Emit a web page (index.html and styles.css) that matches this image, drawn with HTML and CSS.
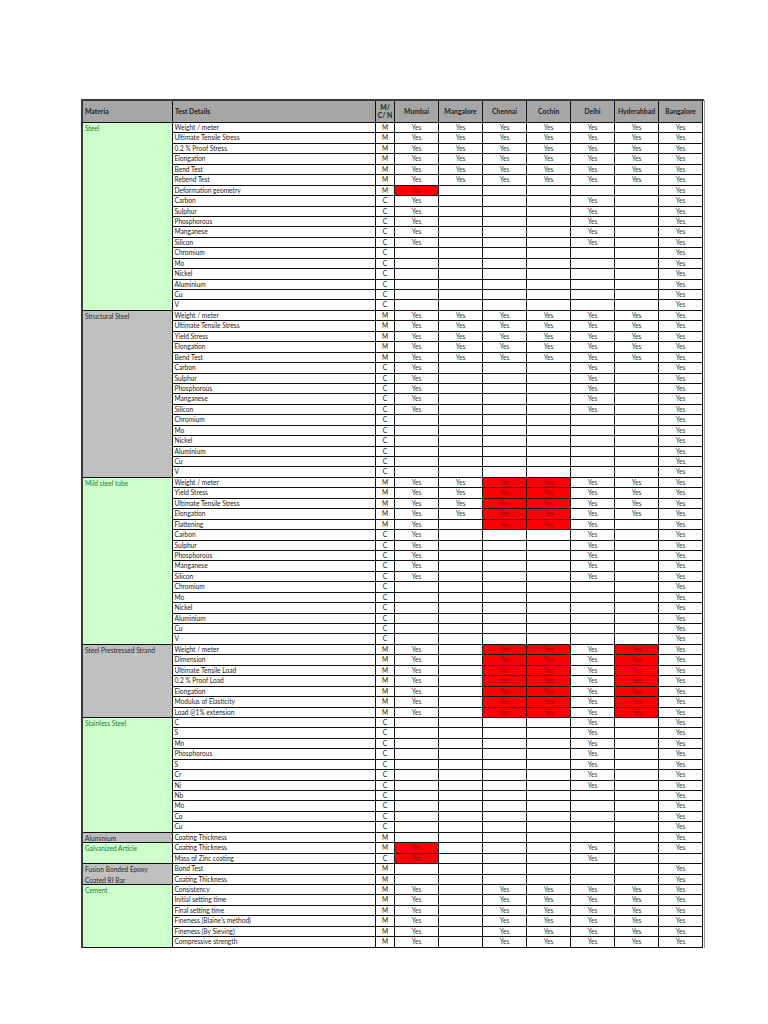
FILE: index.html
```html
<!DOCTYPE html>
<html>
<head>
<meta charset="utf-8">
<title>Material tests</title>
<link rel="stylesheet" href="styles.css">
</head>
<body>
<div class="sheet">
<div class="h hl">Materia</div><div class="h hl">Test Details</div><div class="h hc">M/<br>C/ N</div><div class="h">Mumbai</div><div class="h">Mangalore</div><div class="h">Chennai</div><div class="h">Cochin</div><div class="h">Delhi</div><div class="h">Hyderahbad</div><div class="h">Bangalore</div>

<div class="m g s18">Steel</div>
<div class="t">Weight / meter</div><div class="c">M</div><div class="v">Yes</div><div class="v">Yes</div><div class="v">Yes</div><div class="v">Yes</div><div class="v">Yes</div><div class="v">Yes</div><div class="v">Yes</div>
<div class="t">Ultimate Tensile Stress</div><div class="c">M</div><div class="v">Yes</div><div class="v">Yes</div><div class="v">Yes</div><div class="v">Yes</div><div class="v">Yes</div><div class="v">Yes</div><div class="v">Yes</div>
<div class="t">0.2 % Proof Stress</div><div class="c">M</div><div class="v">Yes</div><div class="v">Yes</div><div class="v">Yes</div><div class="v">Yes</div><div class="v">Yes</div><div class="v">Yes</div><div class="v">Yes</div>
<div class="t">Elongation</div><div class="c">M</div><div class="v">Yes</div><div class="v">Yes</div><div class="v">Yes</div><div class="v">Yes</div><div class="v">Yes</div><div class="v">Yes</div><div class="v">Yes</div>
<div class="t">Bend Test</div><div class="c">M</div><div class="v">Yes</div><div class="v">Yes</div><div class="v">Yes</div><div class="v">Yes</div><div class="v">Yes</div><div class="v">Yes</div><div class="v">Yes</div>
<div class="t">Rebend Test</div><div class="c">M</div><div class="v">Yes</div><div class="v">Yes</div><div class="v">Yes</div><div class="v">Yes</div><div class="v">Yes</div><div class="v">Yes</div><div class="v">Yes</div>
<div class="t">Deformation geometry</div><div class="c">M</div><div class="v r">Yes</div><div class="v"></div><div class="v"></div><div class="v"></div><div class="v"></div><div class="v"></div><div class="v">Yes</div>
<div class="t">Carbon</div><div class="c">C</div><div class="v">Yes</div><div class="v"></div><div class="v"></div><div class="v"></div><div class="v">Yes</div><div class="v"></div><div class="v">Yes</div>
<div class="t">Sulphur</div><div class="c">C</div><div class="v">Yes</div><div class="v"></div><div class="v"></div><div class="v"></div><div class="v">Yes</div><div class="v"></div><div class="v">Yes</div>
<div class="t">Phosphorous</div><div class="c">C</div><div class="v">Yes</div><div class="v"></div><div class="v"></div><div class="v"></div><div class="v">Yes</div><div class="v"></div><div class="v">Yes</div>
<div class="t">Manganese</div><div class="c">C</div><div class="v">Yes</div><div class="v"></div><div class="v"></div><div class="v"></div><div class="v">Yes</div><div class="v"></div><div class="v">Yes</div>
<div class="t">Silicon</div><div class="c">C</div><div class="v">Yes</div><div class="v"></div><div class="v"></div><div class="v"></div><div class="v">Yes</div><div class="v"></div><div class="v">Yes</div>
<div class="t">Chromium</div><div class="c">C</div><div class="v"></div><div class="v"></div><div class="v"></div><div class="v"></div><div class="v"></div><div class="v"></div><div class="v">Yes</div>
<div class="t">Mo</div><div class="c">C</div><div class="v"></div><div class="v"></div><div class="v"></div><div class="v"></div><div class="v"></div><div class="v"></div><div class="v">Yes</div>
<div class="t">Nickel</div><div class="c">C</div><div class="v"></div><div class="v"></div><div class="v"></div><div class="v"></div><div class="v"></div><div class="v"></div><div class="v">Yes</div>
<div class="t">Aluminium</div><div class="c">C</div><div class="v"></div><div class="v"></div><div class="v"></div><div class="v"></div><div class="v"></div><div class="v"></div><div class="v">Yes</div>
<div class="t">Cu</div><div class="c">C</div><div class="v"></div><div class="v"></div><div class="v"></div><div class="v"></div><div class="v"></div><div class="v"></div><div class="v">Yes</div>
<div class="t">V</div><div class="c">C</div><div class="v"></div><div class="v"></div><div class="v"></div><div class="v"></div><div class="v"></div><div class="v"></div><div class="v">Yes</div>

<div class="m k s16">Structural Steel</div>
<div class="t">Weight / meter</div><div class="c">M</div><div class="v">Yes</div><div class="v">Yes</div><div class="v">Yes</div><div class="v">Yes</div><div class="v">Yes</div><div class="v">Yes</div><div class="v">Yes</div>
<div class="t">Ultimate Tensile Stress</div><div class="c">M</div><div class="v">Yes</div><div class="v">Yes</div><div class="v">Yes</div><div class="v">Yes</div><div class="v">Yes</div><div class="v">Yes</div><div class="v">Yes</div>
<div class="t">Yield Stress</div><div class="c">M</div><div class="v">Yes</div><div class="v">Yes</div><div class="v">Yes</div><div class="v">Yes</div><div class="v">Yes</div><div class="v">Yes</div><div class="v">Yes</div>
<div class="t">Elongation</div><div class="c">M</div><div class="v">Yes</div><div class="v">Yes</div><div class="v">Yes</div><div class="v">Yes</div><div class="v">Yes</div><div class="v">Yes</div><div class="v">Yes</div>
<div class="t">Bend Test</div><div class="c">M</div><div class="v">Yes</div><div class="v">Yes</div><div class="v">Yes</div><div class="v">Yes</div><div class="v">Yes</div><div class="v">Yes</div><div class="v">Yes</div>
<div class="t">Carbon</div><div class="c">C</div><div class="v">Yes</div><div class="v"></div><div class="v"></div><div class="v"></div><div class="v">Yes</div><div class="v"></div><div class="v">Yes</div>
<div class="t">Sulphur</div><div class="c">C</div><div class="v">Yes</div><div class="v"></div><div class="v"></div><div class="v"></div><div class="v">Yes</div><div class="v"></div><div class="v">Yes</div>
<div class="t">Phosphorous</div><div class="c">C</div><div class="v">Yes</div><div class="v"></div><div class="v"></div><div class="v"></div><div class="v">Yes</div><div class="v"></div><div class="v">Yes</div>
<div class="t">Manganese</div><div class="c">C</div><div class="v">Yes</div><div class="v"></div><div class="v"></div><div class="v"></div><div class="v">Yes</div><div class="v"></div><div class="v">Yes</div>
<div class="t">Silicon</div><div class="c">C</div><div class="v">Yes</div><div class="v"></div><div class="v"></div><div class="v"></div><div class="v">Yes</div><div class="v"></div><div class="v">Yes</div>
<div class="t">Chromium</div><div class="c">C</div><div class="v"></div><div class="v"></div><div class="v"></div><div class="v"></div><div class="v"></div><div class="v"></div><div class="v">Yes</div>
<div class="t">Mo</div><div class="c">C</div><div class="v"></div><div class="v"></div><div class="v"></div><div class="v"></div><div class="v"></div><div class="v"></div><div class="v">Yes</div>
<div class="t">Nickel</div><div class="c">C</div><div class="v"></div><div class="v"></div><div class="v"></div><div class="v"></div><div class="v"></div><div class="v"></div><div class="v">Yes</div>
<div class="t">Aluminium</div><div class="c">C</div><div class="v"></div><div class="v"></div><div class="v"></div><div class="v"></div><div class="v"></div><div class="v"></div><div class="v">Yes</div>
<div class="t">Cu</div><div class="c">C</div><div class="v"></div><div class="v"></div><div class="v"></div><div class="v"></div><div class="v"></div><div class="v"></div><div class="v">Yes</div>
<div class="t">V</div><div class="c">C</div><div class="v"></div><div class="v"></div><div class="v"></div><div class="v"></div><div class="v"></div><div class="v"></div><div class="v">Yes</div>

<div class="m g s16">Mild steel tube</div>
<div class="t">Weight / meter</div><div class="c">M</div><div class="v">Yes</div><div class="v">Yes</div><div class="v r">Yes</div><div class="v r">Yes</div><div class="v">Yes</div><div class="v">Yes</div><div class="v">Yes</div>
<div class="t">Yield Stress</div><div class="c">M</div><div class="v">Yes</div><div class="v">Yes</div><div class="v r">Yes</div><div class="v r">Yes</div><div class="v">Yes</div><div class="v">Yes</div><div class="v">Yes</div>
<div class="t">Ultimate Tensile Stress</div><div class="c">M</div><div class="v">Yes</div><div class="v">Yes</div><div class="v r">Yes</div><div class="v r">Yes</div><div class="v">Yes</div><div class="v">Yes</div><div class="v">Yes</div>
<div class="t">Elongation</div><div class="c">M</div><div class="v">Yes</div><div class="v">Yes</div><div class="v r">Yes</div><div class="v r">Yes</div><div class="v">Yes</div><div class="v">Yes</div><div class="v">Yes</div>
<div class="t">Flattening</div><div class="c">M</div><div class="v">Yes</div><div class="v"></div><div class="v r">Yes</div><div class="v r">Yes</div><div class="v">Yes</div><div class="v"></div><div class="v">Yes</div>
<div class="t">Carbon</div><div class="c">C</div><div class="v">Yes</div><div class="v"></div><div class="v"></div><div class="v"></div><div class="v">Yes</div><div class="v"></div><div class="v">Yes</div>
<div class="t">Sulphur</div><div class="c">C</div><div class="v">Yes</div><div class="v"></div><div class="v"></div><div class="v"></div><div class="v">Yes</div><div class="v"></div><div class="v">Yes</div>
<div class="t">Phosphorous</div><div class="c">C</div><div class="v">Yes</div><div class="v"></div><div class="v"></div><div class="v"></div><div class="v">Yes</div><div class="v"></div><div class="v">Yes</div>
<div class="t">Manganese</div><div class="c">C</div><div class="v">Yes</div><div class="v"></div><div class="v"></div><div class="v"></div><div class="v">Yes</div><div class="v"></div><div class="v">Yes</div>
<div class="t">Silicon</div><div class="c">C</div><div class="v">Yes</div><div class="v"></div><div class="v"></div><div class="v"></div><div class="v">Yes</div><div class="v"></div><div class="v">Yes</div>
<div class="t">Chromium</div><div class="c">C</div><div class="v"></div><div class="v"></div><div class="v"></div><div class="v"></div><div class="v"></div><div class="v"></div><div class="v">Yes</div>
<div class="t">Mo</div><div class="c">C</div><div class="v"></div><div class="v"></div><div class="v"></div><div class="v"></div><div class="v"></div><div class="v"></div><div class="v">Yes</div>
<div class="t">Nickel</div><div class="c">C</div><div class="v"></div><div class="v"></div><div class="v"></div><div class="v"></div><div class="v"></div><div class="v"></div><div class="v">Yes</div>
<div class="t">Aluminium</div><div class="c">C</div><div class="v"></div><div class="v"></div><div class="v"></div><div class="v"></div><div class="v"></div><div class="v"></div><div class="v">Yes</div>
<div class="t">Cu</div><div class="c">C</div><div class="v"></div><div class="v"></div><div class="v"></div><div class="v"></div><div class="v"></div><div class="v"></div><div class="v">Yes</div>
<div class="t">V</div><div class="c">C</div><div class="v"></div><div class="v"></div><div class="v"></div><div class="v"></div><div class="v"></div><div class="v"></div><div class="v">Yes</div>

<div class="m k s7">Steel Prestressed Strand</div>
<div class="t">Weight / meter</div><div class="c">M</div><div class="v">Yes</div><div class="v"></div><div class="v r">Yes</div><div class="v r">Yes</div><div class="v">Yes</div><div class="v r">Yes</div><div class="v">Yes</div>
<div class="t">Dimension</div><div class="c">M</div><div class="v">Yes</div><div class="v"></div><div class="v r">Yes</div><div class="v r">Yes</div><div class="v">Yes</div><div class="v r">Yes</div><div class="v">Yes</div>
<div class="t">Ultimate Tensile Load</div><div class="c">M</div><div class="v">Yes</div><div class="v"></div><div class="v r">Yes</div><div class="v r">Yes</div><div class="v">Yes</div><div class="v r">Yes</div><div class="v">Yes</div>
<div class="t">0.2 % Proof Load</div><div class="c">M</div><div class="v">Yes</div><div class="v"></div><div class="v r">Yes</div><div class="v r">Yes</div><div class="v">Yes</div><div class="v r">Yes</div><div class="v">Yes</div>
<div class="t">Elongation</div><div class="c">M</div><div class="v">Yes</div><div class="v"></div><div class="v r">Yes</div><div class="v r">Yes</div><div class="v">Yes</div><div class="v r">Yes</div><div class="v">Yes</div>
<div class="t">Modulus of Elasticity</div><div class="c">M</div><div class="v">Yes</div><div class="v"></div><div class="v r">Yes</div><div class="v r">Yes</div><div class="v">Yes</div><div class="v r">Yes</div><div class="v">Yes</div>
<div class="t">Load @1% extension</div><div class="c">M</div><div class="v">Yes</div><div class="v"></div><div class="v r">Yes</div><div class="v r">Yes</div><div class="v">Yes</div><div class="v r">Yes</div><div class="v">Yes</div>

<div class="m g s11">Stainless Steel</div>
<div class="t">C</div><div class="c">C</div><div class="v"></div><div class="v"></div><div class="v"></div><div class="v"></div><div class="v">Yes</div><div class="v"></div><div class="v">Yes</div>
<div class="t">S</div><div class="c">C</div><div class="v"></div><div class="v"></div><div class="v"></div><div class="v"></div><div class="v">Yes</div><div class="v"></div><div class="v">Yes</div>
<div class="t">Mn</div><div class="c">C</div><div class="v"></div><div class="v"></div><div class="v"></div><div class="v"></div><div class="v">Yes</div><div class="v"></div><div class="v">Yes</div>
<div class="t">Phosphorous</div><div class="c">C</div><div class="v"></div><div class="v"></div><div class="v"></div><div class="v"></div><div class="v">Yes</div><div class="v"></div><div class="v">Yes</div>
<div class="t">S</div><div class="c">C</div><div class="v"></div><div class="v"></div><div class="v"></div><div class="v"></div><div class="v">Yes</div><div class="v"></div><div class="v">Yes</div>
<div class="t">Cr</div><div class="c">C</div><div class="v"></div><div class="v"></div><div class="v"></div><div class="v"></div><div class="v">Yes</div><div class="v"></div><div class="v">Yes</div>
<div class="t">Ni</div><div class="c">C</div><div class="v"></div><div class="v"></div><div class="v"></div><div class="v"></div><div class="v">Yes</div><div class="v"></div><div class="v">Yes</div>
<div class="t">Nb</div><div class="c">C</div><div class="v"></div><div class="v"></div><div class="v"></div><div class="v"></div><div class="v"></div><div class="v"></div><div class="v">Yes</div>
<div class="t">Mo</div><div class="c">C</div><div class="v"></div><div class="v"></div><div class="v"></div><div class="v"></div><div class="v"></div><div class="v"></div><div class="v">Yes</div>
<div class="t">Co</div><div class="c">C</div><div class="v"></div><div class="v"></div><div class="v"></div><div class="v"></div><div class="v"></div><div class="v"></div><div class="v">Yes</div>
<div class="t">Cu</div><div class="c">C</div><div class="v"></div><div class="v"></div><div class="v"></div><div class="v"></div><div class="v"></div><div class="v"></div><div class="v">Yes</div>

<div class="m k s1">Aluminium</div>
<div class="t">Coating Thickness</div><div class="c">M</div><div class="v"></div><div class="v"></div><div class="v"></div><div class="v"></div><div class="v"></div><div class="v"></div><div class="v">Yes</div>

<div class="m g s2">Galvanized Article</div>
<div class="t">Coating Thickness</div><div class="c">M</div><div class="v r">Yes</div><div class="v"></div><div class="v"></div><div class="v"></div><div class="v">Yes</div><div class="v"></div><div class="v">Yes</div>
<div class="t">Mass of Zinc coating</div><div class="c">C</div><div class="v r">Yes</div><div class="v"></div><div class="v"></div><div class="v"></div><div class="v">Yes</div><div class="v"></div><div class="v"></div>

<div class="m k s2">Fusion Bonded Epoxy<br>Coated RI Bar</div>
<div class="t">Bond Test</div><div class="c">M</div><div class="v"></div><div class="v"></div><div class="v"></div><div class="v"></div><div class="v"></div><div class="v"></div><div class="v">Yes</div>
<div class="t">Coating Thickness</div><div class="c">M</div><div class="v"></div><div class="v"></div><div class="v"></div><div class="v"></div><div class="v"></div><div class="v"></div><div class="v">Yes</div>

<div class="m g s6">Cement</div>
<div class="t">Consistency</div><div class="c">M</div><div class="v">Yes</div><div class="v"></div><div class="v">Yes</div><div class="v">Yes</div><div class="v">Yes</div><div class="v">Yes</div><div class="v">Yes</div>
<div class="t">Initial setting time</div><div class="c">M</div><div class="v">Yes</div><div class="v"></div><div class="v">Yes</div><div class="v">Yes</div><div class="v">Yes</div><div class="v">Yes</div><div class="v">Yes</div>
<div class="t">Final setting time</div><div class="c">M</div><div class="v">Yes</div><div class="v"></div><div class="v">Yes</div><div class="v">Yes</div><div class="v">Yes</div><div class="v">Yes</div><div class="v">Yes</div>
<div class="t">Fineness (Blaine's method)</div><div class="c">M</div><div class="v">Yes</div><div class="v"></div><div class="v">Yes</div><div class="v">Yes</div><div class="v">Yes</div><div class="v">Yes</div><div class="v">Yes</div>
<div class="t">Fineness (By Sieving)</div><div class="c">M</div><div class="v">Yes</div><div class="v"></div><div class="v">Yes</div><div class="v">Yes</div><div class="v">Yes</div><div class="v">Yes</div><div class="v">Yes</div>
<div class="t">Compressive strength</div><div class="c">M</div><div class="v">Yes</div><div class="v"></div><div class="v">Yes</div><div class="v">Yes</div><div class="v">Yes</div><div class="v">Yes</div><div class="v">Yes</div>
</div>
</body>
</html>
```

FILE: styles.css
```css
* { box-sizing: border-box; }

body {
  margin: 0;
  background: #ffffff;
  font-family: Lato, "Liberation Sans", Arial, sans-serif;
  color: #222222;
}

.sheet {
  display: grid;
  grid-template-columns: 90px 203px 19px repeat(7, 44px);
  grid-template-rows: 22px;
  grid-auto-rows: 10.45px;
  width: 623px;
  margin: 99px 0 0 81px;
  border-top: 2px solid #3a3a3a;
  border-left: 2px solid #3a3a3a;
  box-shadow: 1px 1px 0 #9a9a9a;
}

.sheet > div {
  border-right: 1px solid #111111;
  border-bottom: 1px solid #111111;
  font-size: 6.6px;
  line-height: 9.45px;
  white-space: nowrap;
  overflow: hidden;
}

.h {
  background: #a6a6a6;
  font-weight: 700;
  color: #1e1e1e;
  display: flex;
  align-items: center;
  justify-content: center;
  text-align: center;
  font-size: 6.8px !important;
}

.hl {
  justify-content: flex-start;
  padding-left: 2px;
}

.hc {
  line-height: 7.6px !important;
  white-space: normal !important;
}

.m {
  padding-left: 2px;
  line-height: 10.45px !important;
  white-space: normal !important;
}

.g {
  background: #ccffcc;
  color: #2a7a2a;
}

.k {
  background: #c0c0c0;
  color: #2a2a2a;
}

.s1 { grid-row: span 1; }
.s2 { grid-row: span 2; }
.s6 { grid-row: span 6; }
.s7 { grid-row: span 7; }
.s11 { grid-row: span 11; }
.s16 { grid-row: span 16; }
.s18 { grid-row: span 18; }

.t {
  padding-left: 1.5px;
  background: #ffffff;
}

.c {
  text-align: center;
  background: #ffffff;
}

.v {
  text-align: center;
  background: #ffffff;
  color: #3a3a3a;
}

.v.r {
  background: #ff0000;
  color: #8a1010;
}
```
